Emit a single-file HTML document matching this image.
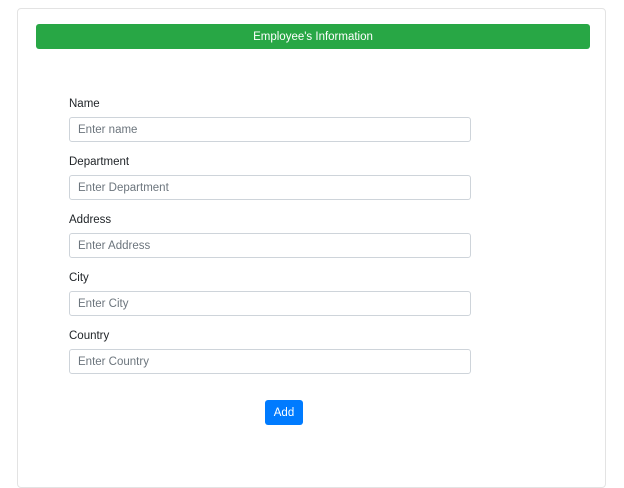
<!DOCTYPE html>
<html><head><style>
body{margin:0;background:#fff;font-family:"Liberation Sans",sans-serif;width:624px;height:438px;overflow:hidden;position:relative}
.card{position:absolute;left:17px;top:8px;width:589px;height:480px;border:1px solid #e3e3e3;border-radius:4px;box-sizing:border-box}
.hdr{position:absolute;left:36px;top:24px;width:554px;height:25px;background:#28a745;border-radius:3px;color:#fff;font-size:11.5px;display:flex;align-items:center;justify-content:center}
.lbl{position:absolute;left:69px;font-size:11.5px;color:#212529}
.inp{position:absolute;left:69px;width:402px;height:25px;border:1px solid #ced4da;border-radius:3px;box-sizing:border-box;font-size:11.5px;color:#6c757d;padding-left:8px;display:flex;align-items:center;padding-top:1px}
.btn{position:absolute;left:265px;top:400px;width:38px;height:25px;background:#007bff;border-radius:3px;color:#fff;font-size:11.5px;display:flex;align-items:center;justify-content:center;padding-top:1px;box-sizing:border-box}
</style></head><body>
<div class="card"></div>
<div class="hdr">Employee's Information</div>
<div class="lbl" style="top:98px">Name</div><div class="inp" style="top:117px">Enter name</div>
<div class="lbl" style="top:156px">Department</div><div class="inp" style="top:175px">Enter Department</div>
<div class="lbl" style="top:214px">Address</div><div class="inp" style="top:233px">Enter Address</div>
<div class="lbl" style="top:272px">City</div><div class="inp" style="top:291px">Enter City</div>
<div class="lbl" style="top:330px">Country</div><div class="inp" style="top:349px">Enter Country</div>
<div class="btn">Add</div>
</body></html>
